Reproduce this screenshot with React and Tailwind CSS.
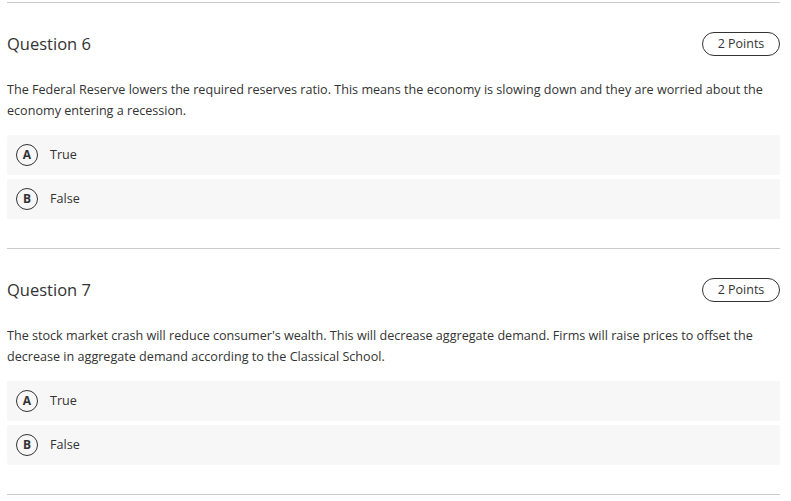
import React from "react";

const questions = [
  {
    num: 6,
    text: "The Federal Reserve lowers the required reserves ratio. This means the economy is slowing down and they are worried about the economy entering a recession.",
  },
  {
    num: 7,
    text: "The stock market crash will reduce consumer's wealth. This will decrease aggregate demand. Firms will raise prices to offset the decrease in aggregate demand according to the Classical School.",
  },
];

const options = [
  { letter: "A", label: "True" },
  { letter: "B", label: "False" },
];

const Question = ({ num, text }) => {
  return (
    <div className="border-t border-[#cccccc] pt-[29px] pb-[29px]">
      <div className="flex items-center justify-between h-[24px]">
        <p className="text-[16.5px] text-[#333333]">Question {num}</p>
        <span className="h-[24px] w-[78px] flex items-center justify-center border border-[#333333] rounded-full text-[12.5px] text-[#333333]">
          2 Points
        </span>
      </div>
      <p className="mt-[23px] text-[12.6px] leading-[21px] text-[#333333] pr-[10px]">
        {text}
      </p>
      <div className="mt-[14px] flex flex-col gap-[4px]">
        {options.map((opt) => (
          <div
            key={opt.letter}
            className="h-[40px] bg-[#f7f7f7] rounded-[2px] flex items-center pl-[9px]"
          >
            <span className="w-[22px] h-[22px] rounded-full border border-[#333333] flex items-center justify-center text-[12px] font-bold text-[#333333]">
              {opt.letter}
            </span>
            <span className="ml-[12px] text-[12.6px] text-[#333333]">
              {opt.label}
            </span>
          </div>
        ))}
      </div>
    </div>
  );
};

const App = () => {
  return (
    <div className="bg-white min-h-screen pt-[2px] px-[7px] w-[787px]" style={{ fontFamily: '"Open Sans", sans-serif' }}>
      {questions.map((q) => (
        <Question key={q.num} num={q.num} text={q.text} />
      ))}
      <div className="border-t border-[#cccccc]"></div>
    </div>
  );
};

export default App;
